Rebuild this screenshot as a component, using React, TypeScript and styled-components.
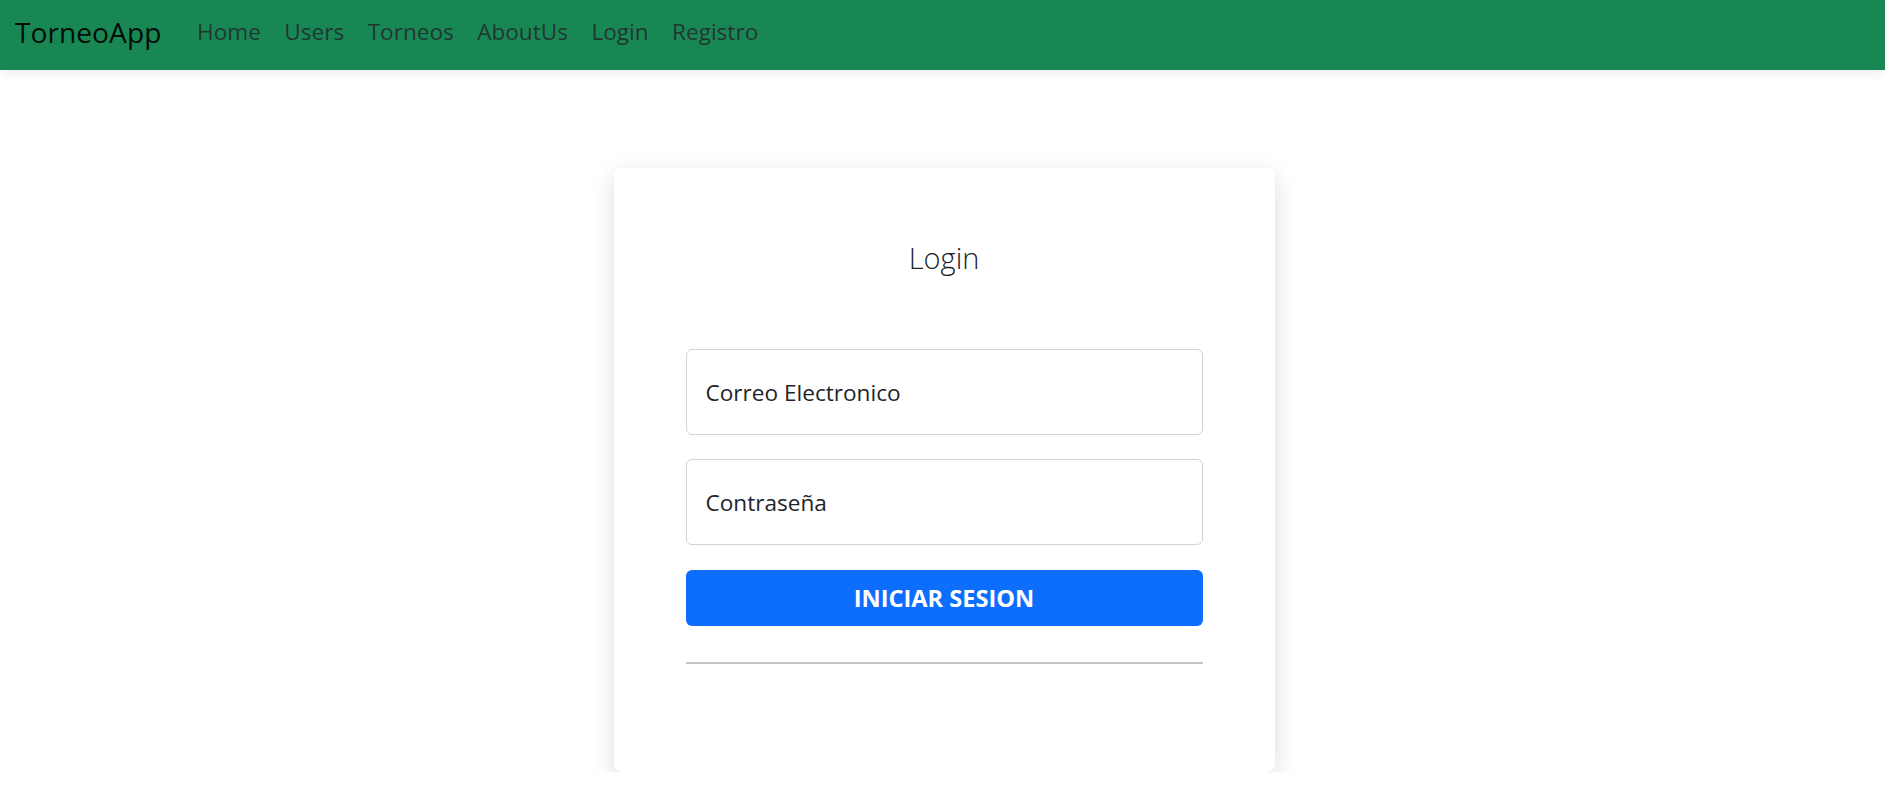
import React from "react";
import styled, { createGlobalStyle } from "styled-components";

const GlobalStyle = createGlobalStyle`
  html, body {
    margin: 0;
    padding: 0;
    background: #ffffff;
    font-family: "Open Sans", "Noto Sans", "Liberation Sans", sans-serif;
    color: #212529;
  }
  * { box-sizing: border-box; }
`;

const NavBar = styled.nav`
  height: 70px;
  background: #198754;
  display: flex;
  align-items: center;
  padding: 0 0 0 15px;
  box-shadow: 0 3px 12px rgba(0, 0, 0, 0.08);
  position: relative;
  z-index: 1;
`;

const Brand = styled.a`
  font-size: 28.2px;
  line-height: 1;
  color: rgba(0, 0, 0, 0.92);
  text-decoration: none;
  margin-right: 24px;
  margin-top: -5px;
`;

const NavLinks = styled.div`
  display: flex;
  align-items: center;
  margin-top: -5px;
`;

const NavLink = styled.a`
  font-size: 22.6px;
  line-height: 1;
  padding: 0 11.7px;
  color: rgba(33, 37, 41, 0.82);
  text-decoration: none;
`;

const Main = styled.main`
  display: flex;
  justify-content: center;
  padding: 98px 0 0 3px;
`;

const Card = styled.div`
  width: 661px;
  height: 604px;
  background: #fff;
  border-radius: 8px;
  box-shadow: 0 7px 24px rgba(0, 0, 0, 0.14);
  padding: 73px 72px 0;
  display: flex;
  flex-direction: column;
`;

const Title = styled.h2`
  margin: 0 0 74px;
  font-size: 29px;
  font-weight: 300;
  line-height: 34px;
  text-align: center;
  color: #212529;
`;

const Field = styled.input`
  height: 86px;
  width: 100%;
  border: 1px solid #ced4da;
  border-radius: 6px;
  padding: 0 19px;
  font-family: inherit;
  font-size: 22.6px;
  color: #212529;
  margin-bottom: 24px;
  outline: none;
  &::placeholder {
    color: #212529;
    opacity: 1;
  }
`;

const SubmitButton = styled.button`
  height: 56px;
  width: 100%;
  border: none;
  border-radius: 6px;
  background: #0d6efd;
  color: #fff;
  font-family: inherit;
  font-weight: 700;
  font-size: 23.6px;
  margin-top: 1px;
  cursor: pointer;
`;

const Divider = styled.hr`
  margin: 36px 0 0;
  border: none;
  border-top: 2px solid #c4c4c4;
`;

export default function App() {
  return (
    <>
      <GlobalStyle />
      <NavBar>
        <Brand href="#">TorneoApp</Brand>
        <NavLinks>
          {["Home", "Users", "Torneos", "AboutUs", "Login", "Registro"].map((l) => (
            <NavLink key={l} href="#">
              {l}
            </NavLink>
          ))}
        </NavLinks>
      </NavBar>
      <Main>
        <Card>
          <Title>Login</Title>
          <Field type="email" placeholder="Correo Electronico" />
          <Field type="password" placeholder="Contraseña" />
          <SubmitButton>INICIAR SESION</SubmitButton>
          <Divider />
        </Card>
      </Main>
    </>
  );
}
